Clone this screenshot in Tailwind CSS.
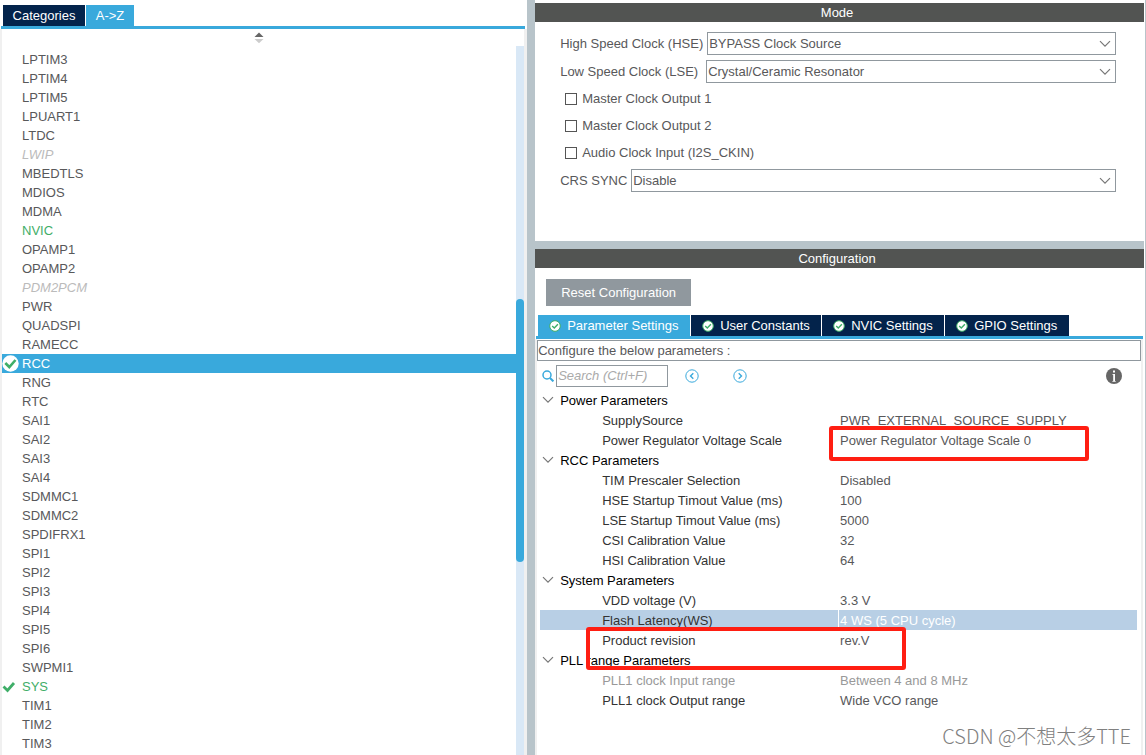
<!DOCTYPE html>
<html lang="en">
<head>
<meta charset="utf-8">
<title>RCC Mode and Configuration</title>
<script src="https://cdn.jsdelivr.net/npm/@tailwindcss/browser@4"></script>
</head>
<body class="h-screen overflow-hidden bg-white font-['Liberation_Sans',Arial,sans-serif] text-[13px] leading-[19px] text-[#58585a]">
<svg class="hidden">
  <symbol id="chev" viewBox="0 0 12 8"><path d="M1 1.2 6 6.2 11 1.2" fill="none" stroke="#777" stroke-width="1.2"/></symbol>
  <symbol id="ok" viewBox="0 0 12 12"><circle cx="6" cy="6" r="5.3" fill="#fff" stroke="#3fae68" stroke-width="1"/><path d="M3.2 5.9 5.3 8 8.9 4.2" fill="none" stroke="#3fae68" stroke-width="1.4"/></symbol>
</svg>
<div class="flex h-full">
  <aside class="flex w-[46%] shrink-0 flex-col overflow-hidden">
    <nav class="mr-[2px] ml-px flex h-[29px] shrink-0 items-end gap-px border-b-[3px] border-[#39a9dc] pl-[2px] text-white">
      <button class="h-[21px] w-[82px] bg-[#03234b]">Categories</button>
      <button class="h-[21px] w-[48px] bg-[#39a9dc]">A-&gt;Z</button>
    </nav>
    <div class="flex min-h-0 flex-1 flex-col border-r-[3px] border-l-2 border-[#f0f0f0]">
      <button class="flex h-[17px] shrink-0 items-center justify-center pr-[8px]" aria-label="Sort">
        <svg class="h-[12px] w-[10px]" viewBox="0 0 10 12"><path d="M5 .5 9.5 5H.5Z" fill="#666"/><path d="M5 11.2 9.5 7H.5Z" fill="#ccc"/></svg>
      </button>
      <div class="flex min-h-0 flex-1">
        <ul id="list" class="min-w-0 flex-1 overflow-hidden pt-1"></ul>
        <div class="flex w-2 flex-col bg-[#d9e8f6]">
          <div class="grow-[253]"></div>
          <div class="grow-[263] rounded-full bg-[#39a9dc]"></div>
          <div class="grow-[193]"></div>
        </div>
      </div>
    </div>
  </aside>
  <div class="w-2 shrink-0 bg-[#b8c4ca]"></div>
  <main class="relative flex min-w-0 flex-1 flex-col border-r border-[#b8c4ca] pr-px">
    <section class="border-b-8 border-[#b8c4ca] pt-[3px]">
      <h2 class="bg-[#525452] pr-[5px] text-center text-white">Mode</h2>
      <div class="flex flex-col pt-[10px] pr-7 pb-[49px] pl-[25px]">
        <div class="mb-[5px] flex h-[23px] items-center">
          <label for="hse" class="w-[147px] shrink-0 whitespace-nowrap">High Speed Clock (HSE)</label>
          <div class="relative h-full flex-1">
            <select id="hse" class="h-full w-full appearance-none border border-[#90989e] bg-white pl-px"><option>BYPASS Clock Source</option></select>
            <svg class="pointer-events-none absolute top-[8px] right-[5px] h-[8px] w-[12px]"><use href="#chev"/></svg>
          </div>
        </div>
        <div class="mb-[2px] flex h-[23px] items-center">
          <label for="lse" class="w-[146px] shrink-0 whitespace-nowrap">Low Speed Clock (LSE)</label>
          <div class="relative h-full flex-1">
            <select id="lse" class="h-full w-full appearance-none border border-[#90989e] bg-white pl-px"><option>Crystal/Ceramic Resonator</option></select>
            <svg class="pointer-events-none absolute top-[8px] right-[5px] h-[8px] w-[12px]"><use href="#chev"/></svg>
          </div>
        </div>
        <label class="flex h-[27px] items-center gap-[5px] pl-[5px]"><input type="checkbox" class="size-[12px] appearance-none border border-[#555] bg-white">Master Clock Output 1</label>
        <label class="flex h-[27px] items-center gap-[5px] pl-[5px]"><input type="checkbox" class="size-[12px] appearance-none border border-[#555] bg-white">Master Clock Output 2</label>
        <label class="mb-[3px] flex h-[27px] items-center gap-[5px] pl-[5px]"><input type="checkbox" class="size-[12px] appearance-none border border-[#555] bg-white">Audio Clock Input (I2S_CKIN)</label>
        <div class="flex h-[23px] items-center">
          <label for="crs" class="w-[71px] shrink-0 whitespace-nowrap">CRS SYNC</label>
          <div class="relative h-full flex-1">
            <select id="crs" class="h-full w-full appearance-none border border-[#90989e] bg-white pl-px"><option>Disable</option></select>
            <svg class="pointer-events-none absolute top-[8px] right-[5px] h-[8px] w-[12px]"><use href="#chev"/></svg>
          </div>
        </div>
      </div>
    </section>
    <section class="flex min-h-0 flex-1 flex-col">
      <h2 class="bg-[#525452] pr-[5px] text-center text-white">Configuration</h2>
      <div class="px-[11px] pt-[11px] pb-[9px]">
        <button class="block h-[27px] w-[145px] bg-[#90989e] text-white">Reset Configuration</button>
      </div>
      <nav class="mr-px ml-px flex shrink-0 gap-px border-b-[3px] border-[#39a9dc] pl-[2px] text-white">
        <button class="flex h-[21px] w-[152px] items-center gap-[6px] bg-[#39a9dc] pl-[11px] whitespace-nowrap"><svg class="size-[12px]"><use href="#ok"/></svg>Parameter Settings</button>
        <button class="flex h-[21px] w-[130px] items-center gap-[6px] bg-[#03234b] pl-[11px] whitespace-nowrap"><svg class="size-[12px]"><use href="#ok"/></svg>User Constants</button>
        <button class="flex h-[21px] w-[122px] items-center gap-[6px] bg-[#03234b] pl-[11px] whitespace-nowrap"><svg class="size-[12px]"><use href="#ok"/></svg>NVIC Settings</button>
        <button class="flex h-[21px] w-[124px] items-center gap-[6px] bg-[#03234b] pl-[11px] whitespace-nowrap"><svg class="size-[12px]"><use href="#ok"/></svg>GPIO Settings</button>
      </nav>
      <div class="mr-px min-h-0 flex-1 border-r-2 border-l-2 border-[#f0f0f0] pt-px">
        <p class="h-[21px] border border-[#90989e]">Configure the below parameters :</p>
        <div class="flex h-[29px] items-center pr-[19px] pl-[5px]">
          <svg class="mr-[2px] size-[12px]" viewBox="0 0 12 12" fill="none" stroke="#39a9dc" stroke-width="1.5"><circle cx="5" cy="5" r="4"/><path d="m8 8 3.4 3.4" stroke-width="2"/></svg>
          <input aria-label="Search" placeholder="Search (Ctrl+F)" class="h-[22px] w-[112px] border border-[#90989e] pl-px italic placeholder:text-[#aaa]">
          <button class="ml-[17px]" aria-label="Previous"><svg class="size-[14px]" viewBox="0 0 14 14" fill="none" stroke="#39a9dc"><circle cx="7" cy="7" r="6.2"/><path d="M8.3 4.2 5.5 7l2.8 2.8" stroke-width="1.4"/></svg></button>
          <button class="ml-[34px]" aria-label="Next"><svg class="size-[14px]" viewBox="0 0 14 14" fill="none" stroke="#39a9dc"><circle cx="7" cy="7" r="6.2"/><path d="M5.7 4.2 8.5 7 5.7 9.8" stroke-width="1.4"/></svg></button>
          <button class="ml-auto" aria-label="Information"><svg class="size-[16px]" viewBox="0 0 16 16"><circle cx="8" cy="8" r="8" fill="#666"/><path d="M7 2.6h2v2H7zM6.4 6H9v7h.7v.8H6.4V13h.8V6.8h-.8z" fill="#fff"/></svg></button>
        </div>
        <div class="relative mr-1 ml-[3px]">
          <table class="w-full table-fixed border-collapse"><tbody id="params"></tbody></table>
          <div class="pointer-events-none absolute top-[36px] left-[289px] h-[35px] w-[260px] rounded-[3px] border-4 border-[#ff1e12]"></div>
          <div class="pointer-events-none absolute top-[237px] left-[46px] h-[43px] w-[320px] rounded-[3px] border-4 border-[#ff1e12]"></div>
        </div>
      </div>
    </section>
    <div class="absolute right-[14px] bottom-1 font-['Noto_Sans_CJK_SC',sans-serif] text-[20px] leading-[30px] font-light whitespace-nowrap text-[#808080]">CSDN @不想太多TTE</div>
  </main>
</div>
<script>
const names = 'LPTIM3 LPTIM4 LPTIM5 LPUART1 LTDC LWIP MBEDTLS MDIOS MDMA NVIC OPAMP1 OPAMP2 PDM2PCM PWR QUADSPI RAMECC RCC RNG RTC SAI1 SAI2 SAI3 SAI4 SDMMC1 SDMMC2 SPDIFRX1 SPI1 SPI2 SPI3 SPI4 SPI5 SPI6 SWPMI1 SYS TIM1 TIM2 TIM3'.split(' ');
const look = { LWIP: 'italic text-[#bbb]', PDM2PCM: 'italic text-[#bbb]', NVIC: 'text-[#3fae68]', SYS: 'text-[#3fae68]', RCC: 'bg-[#39a9dc] text-white' };
const mark = {
  RCC: '<svg class="size-[17px]" viewBox="0 0 17 17"><circle cx="8.5" cy="8.5" r="8.2" fill="#fff"/><path d="m3.3 8 4 4 6.2-7" fill="none" stroke="#3fae68" stroke-width="2.6"/></svg>',
  SYS: '<svg class="size-[14px]" viewBox="0 0 14 14"><path d="m1.5 6.5 4 4L12 3" fill="none" stroke="#3fae68" stroke-width="2.8"/></svg>'
};
document.getElementById('list').innerHTML = names.map(n =>
  `<li class="flex h-[19px] items-center ${look[n] || ''}"><span class="w-5 shrink-0">${mark[n] || ''}</span><a href="#${n}">${n}</a></li>`).join('');

const rows = [
  ['Power Parameters'],
  ['SupplySource', 'PWR_EXTERNAL_SOURCE_SUPPLY'],
  ['Power Regulator Voltage Scale', 'Power Regulator Voltage Scale 0'],
  ['RCC Parameters'],
  ['TIM Prescaler Selection', 'Disabled'],
  ['HSE Startup Timout Value (ms)', '100'],
  ['LSE Startup Timout Value (ms)', '5000'],
  ['CSI Calibration Value', '32'],
  ['HSI Calibration Value', '64'],
  ['System Parameters'],
  ['VDD voltage (V)', '3.3 V'],
  ['Flash Latency(WS)', '4 WS (5 CPU cycle)', 'sel'],
  ['Product revision', 'rev.V'],
  ['PLL range Parameters'],
  ['PLL1 clock Input range', 'Between 4 and 8 MHz', 'off'],
  ['PLL1 clock Output range', 'Wide VCO range']
];
document.getElementById('params').innerHTML = rows.map(([k, v, s]) => {
  if (!v) return `<tr class="h-5 text-black"><th colspan="2" class="p-0 text-left font-normal"><span class="flex items-center"><svg class="mr-[6px] ml-[2px] h-[8px] w-[12px]"><use href="#chev"/></svg>${k}</span></th></tr>`;
  const row = s === 'sel' ? 'bg-[#b8cfe5] text-white' : s === 'off' ? 'text-[#999]' : '';
  const name = s === 'off' ? '' : 'text-[#333]';
  const edge = s === 'sel' ? 'border-white' : 'border-transparent';
  return `<tr class="h-5 ${row}"><td class="p-0 pl-[62px] whitespace-nowrap ${name}">${k}</td><td class="border-l ${edge} p-0 pl-px whitespace-nowrap">${v}</td></tr>`;
}).join('');
</script>
</body>
</html>
